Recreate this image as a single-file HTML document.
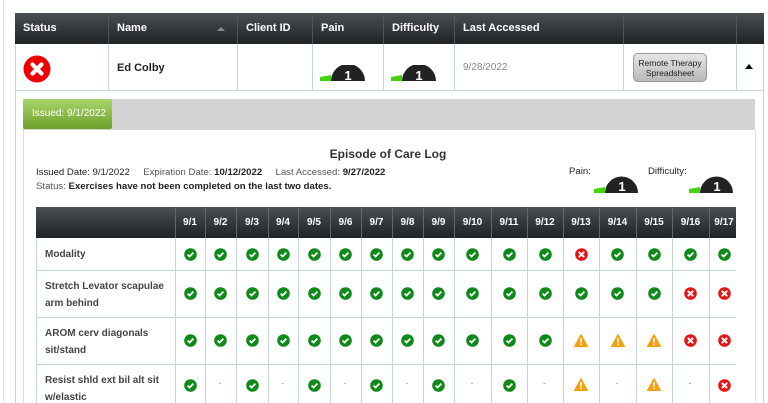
<!DOCTYPE html>
<html style="overflow:hidden;height:403px"><head><meta charset="utf-8"><style>
*{margin:0;padding:0;box-sizing:border-box}
body{width:768px;height:403px;overflow:hidden;background:#fff;font-family:"Liberation Sans",Arial,sans-serif;position:relative}
.a{position:absolute}
.hdr{background:linear-gradient(#4a4f54,#1f2326);color:#fff;font-weight:bold;font-size:11px}
.vl{position:absolute;width:1px;background:#c5d3e0}
.hl{position:absolute;height:1px;background:#c5d3e0}
.ic{position:absolute;width:13px;height:13px}
.t{font-size:9.6px;color:#222}
.rl{position:absolute;left:45px;font-size:10px;font-weight:bold;color:#444;line-height:17px}
</style></head><body>
<div class="a" style="left:3px;top:0;width:1px;height:403px;background:#ddd"></div>
<div class="a hdr" style="left:15px;top:13px;width:749px;height:31px"></div>
<div class="a" style="left:15px;top:44px;width:1px;height:359px;background:#c5d3e0"></div>
<div class="a" style="left:763px;top:44px;width:1px;height:359px;background:#c5d3e0"></div>
<div class="a" style="left:23px;top:22px;color:#fff;font-weight:bold;font-size:11px">Status</div>
<div class="a" style="left:117px;top:22px;color:#fff;font-weight:bold;font-size:11px">Name</div>
<div class="a" style="left:217px;top:27px;width:0;height:0;border-left:4px solid transparent;border-right:4px solid transparent;border-bottom:4px solid #888"></div>
<div class="a" style="left:246px;top:22px;color:#fff;font-weight:bold;font-size:11px">Client ID</div>
<div class="a" style="left:321px;top:22px;color:#fff;font-weight:bold;font-size:11px">Pain</div>
<div class="a" style="left:392px;top:22px;color:#fff;font-weight:bold;font-size:11px">Difficulty</div>
<div class="a" style="left:463px;top:22px;color:#fff;font-weight:bold;font-size:11px">Last Accessed</div>
<div class="vl" style="left:108px;top:13px;height:77px;background:#555"></div>
<div class="vl" style="left:237px;top:13px;height:77px;background:#555"></div>
<div class="vl" style="left:312px;top:13px;height:77px;background:#555"></div>
<div class="vl" style="left:383px;top:13px;height:77px;background:#555"></div>
<div class="vl" style="left:454px;top:13px;height:77px;background:#555"></div>
<div class="vl" style="left:623px;top:13px;height:77px;background:#555"></div>
<div class="vl" style="left:736px;top:13px;height:77px;background:#555"></div>
<div class="vl" style="left:108px;top:44px;height:46px"></div>
<div class="vl" style="left:237px;top:44px;height:46px"></div>
<div class="vl" style="left:312px;top:44px;height:46px"></div>
<div class="vl" style="left:383px;top:44px;height:46px"></div>
<div class="vl" style="left:454px;top:44px;height:46px"></div>
<div class="vl" style="left:623px;top:44px;height:46px"></div>
<div class="vl" style="left:736px;top:44px;height:46px"></div>
<div class="hl" style="left:15px;top:90px;width:749px"></div>
<svg class="a" style="left:23px;top:55px" width="28" height="28" viewBox="0 0 28 28"><circle cx="14" cy="14" r="13.5" fill="#e00"/><path d="M9.5 9.5L18.5 18.5M18.5 9.5L9.5 18.5" stroke="#fff" stroke-width="4.2" stroke-linecap="round"/></svg>
<div class="a" style="left:117px;top:62px;font-size:11px;font-weight:bold;color:#222">Ed Colby</div>
<svg class="a" style="left:320px;top:65px" width="46" height="16"><polygon points="0,12 11,10 11,16 0,16" fill="#44d40c"/><path d="M11 16A16 16 0 0 1 45 16Z" fill="#222"/><text x="28" y="15" font-family="Liberation Sans" font-weight="bold" font-size="13" fill="#fff" text-anchor="middle">1</text></svg>
<svg class="a" style="left:391px;top:65px" width="46" height="16"><polygon points="0,12 11,10 11,16 0,16" fill="#44d40c"/><path d="M11 16A16 16 0 0 1 45 16Z" fill="#222"/><text x="28" y="15" font-family="Liberation Sans" font-weight="bold" font-size="13" fill="#fff" text-anchor="middle">1</text></svg>
<div class="a" style="left:463px;top:62px;font-size:10px;color:#888">9/28/2022</div>
<div class="a" style="left:633px;top:53px;width:74px;height:29px;border:1px solid #999;border-radius:5px;background:linear-gradient(#e6e6e6,#b8b8b8);font-size:8.5px;color:#222;text-align:center;line-height:10px;padding-top:4px">Remote Therapy<br>Spreadsheet</div>
<div class="a" style="left:745px;top:64px;width:0;height:0;border-left:4px solid transparent;border-right:4px solid transparent;border-bottom:5px solid #000"></div>
<div class="a" style="left:23px;top:99px;width:732px;height:31px;background:#d3d3d3"></div>
<div class="a" style="left:23px;top:99px;width:89px;height:30px;background:linear-gradient(#a8d66a,#6e9f2a);border-radius:2px;color:#fff;font-size:10px;line-height:30px;padding-left:9px">Issued: 9/1/2022</div>
<div class="a" style="left:23px;top:130px;width:1px;height:273px;background:#ddd"></div>
<div class="a" style="left:0;width:776px;top:147px;text-align:center;font-size:12px;font-weight:bold;color:#333">Episode of Care Log</div>
<div class="a t" style="left:36px;top:167px">Issued Date: 9/1/2022 &nbsp;&nbsp;&nbsp;&nbsp;<span style="color:#555">Expiration Date:</span> <b>10/12/2022</b> &nbsp;&nbsp;&nbsp;&nbsp;<span style="color:#555">Last Accessed:</span> <b>9/27/2022</b></div>
<div class="a t" style="left:36px;top:181px"><span style="color:#555">Status:</span> <b>Exercises have not been completed on the last two dates.</b></div>
<div class="a t" style="left:569px;top:166px">Pain:</div>
<div class="a t" style="left:648px;top:166px">Difficulty:</div>
<svg class="a" style="left:594px;top:176px" width="46" height="17"><polygon points="0,13 11,11 11,17 0,17" fill="#44d40c"/><path d="M11 17A16.5 16.5 0 0 1 44 17Z" fill="#222"/><text x="28" y="15" font-family="Liberation Sans" font-weight="bold" font-size="13" fill="#fff" text-anchor="middle">1</text></svg>
<svg class="a" style="left:689px;top:176px" width="46" height="17"><polygon points="0,13 11,11 11,17 0,17" fill="#44d40c"/><path d="M11 17A16.5 16.5 0 0 1 44 17Z" fill="#222"/><text x="28" y="15" font-family="Liberation Sans" font-weight="bold" font-size="13" fill="#fff" text-anchor="middle">1</text></svg>
<div class="a hdr" style="left:36px;top:207px;width:700px;height:31px"></div>
<div class="a" style="left:36px;top:238px;width:1px;height:165px;background:#c5d3e0"></div>
<div id="grid"></div>
<div class="rl" style="top:246px">Modality</div>
<div class="rl" style="top:278px">Stretch Levator scapulae<br>arm behind</div>
<div class="rl" style="top:325px">AROM cerv diagonals<br>sit/stand</div>
<div class="rl" style="top:372px">Resist shld ext bil alt sit<br>w/elastic</div>
<div class="a" style="left:755px;top:130px;width:1px;height:273px;background:#ddd"></div>
<script>
var xs=[175,205,236,268,298,330,361,392,423,454,491,527,563,599,636,672,709,740];
var lab=["9/1","9/2","9/3","9/4","9/5","9/6","9/7","9/8","9/9","9/10","9/11","9/12","9/13","9/14","9/15","9/16","9/17"];
var rows=[[238,270],[270,317],[317,364],[364,420]];
var C='c',X='x',W='w',D='-';
var data=[
[C,C,C,C,C,C,C,C,C,C,C,C,X,C,C,C,C],
[C,C,C,C,C,C,C,C,C,C,C,C,C,C,C,X,X],
[C,C,C,C,C,C,C,C,C,C,C,C,W,W,W,X,X],
[C,D,C,D,C,D,C,D,C,D,C,D,W,D,W,D,X]];
var h='';
h+='<div style="position:absolute;left:736px;top:200px;width:19px;height:203px;background:#fff"></div>';
for(var i=0;i<xs.length-1;i++){
 var cx=(xs[i]+xs[i+1])/2;
 if(i==16)cx=724;
 h+='<div class="vl" style="left:'+xs[i]+'px;top:207px;height:31px;background:#666"></div>';
 h+='<div class="vl" style="left:'+xs[i]+'px;top:238px;height:165px"></div>';
 h+='<div class="a" style="left:'+(cx-20)+'px;width:40px;top:217px;text-align:center;color:#fff;font-weight:bold;font-size:10px">'+lab[i]+'</div>';
 for(var r=0;r<4;r++){
  var cy=(rows[r][0]+rows[r][1])/2; if(r==3)cy=385;
  var v=data[r][i],s='';
  if(v==C)s='<svg class="ic" style="left:'+(cx-6.5)+'px;top:'+(cy-6.5)+'px" viewBox="0 0 13 13"><circle cx="6.5" cy="6.5" r="6.3" fill="#0f8a1a"/><path d="M3.6 6.6L5.6 8.5L9.4 4.6" stroke="#fff" stroke-width="1.8" fill="none"/></svg>';
  else if(v==X)s='<svg class="ic" style="left:'+(cx-6.5)+'px;top:'+(cy-6.5)+'px" viewBox="0 0 13 13"><circle cx="6.5" cy="6.5" r="6.3" fill="#e31515"/><path d="M4.4 4.4L8.6 8.6M8.6 4.4L4.4 8.6" stroke="#fff" stroke-width="2" stroke-linecap="round"/></svg>';
  else if(v==W)s='<svg class="ic" style="left:'+(cx-7)+'px;top:'+(cy-7)+'px;width:14px;height:13px" viewBox="0 0 14 13"><path d="M7 0.5L13.6 12.5H0.4Z" fill="#f5a010" stroke="#f5a010" stroke-linejoin="round"/><rect x="6.2" y="4" width="1.6" height="4.5" fill="#fff"/><rect x="6.2" y="9.5" width="1.6" height="1.6" fill="#fff"/></svg>';
  else s='<div class="a" style="left:'+(cx-2)+'px;top:'+(cy-7)+'px;font-size:9px;color:#999">-</div>';
  h+=s;
 }
}
h+='<div class="hl" style="left:36px;top:270px;width:700px"></div><div class="hl" style="left:36px;top:317px;width:700px"></div><div class="hl" style="left:36px;top:364px;width:700px"></div>';
document.getElementById('grid').innerHTML=h;
</script>
</body></html>
